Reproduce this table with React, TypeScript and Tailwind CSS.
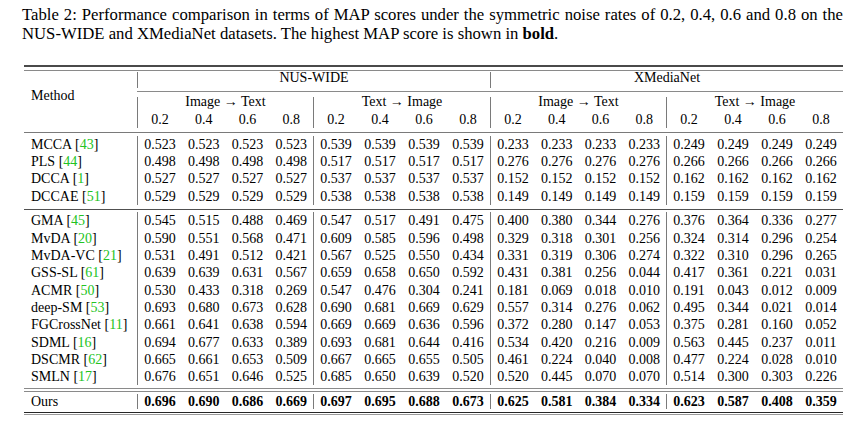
import React from 'react';

type Row = { name: string; cite: string; vals: string[][] };

const top: Row[] = [
  { name: 'MCCA', cite: '43', vals: [['0.523', '0.523', '0.523', '0.523'], ['0.539', '0.539', '0.539', '0.539'], ['0.233', '0.233', '0.233', '0.233'], ['0.249', '0.249', '0.249', '0.249']] },
  { name: 'PLS', cite: '44', vals: [['0.498', '0.498', '0.498', '0.498'], ['0.517', '0.517', '0.517', '0.517'], ['0.276', '0.276', '0.276', '0.276'], ['0.266', '0.266', '0.266', '0.266']] },
  { name: 'DCCA', cite: '1', vals: [['0.527', '0.527', '0.527', '0.527'], ['0.537', '0.537', '0.537', '0.537'], ['0.152', '0.152', '0.152', '0.152'], ['0.162', '0.162', '0.162', '0.162']] },
  { name: 'DCCAE', cite: '51', vals: [['0.529', '0.529', '0.529', '0.529'], ['0.538', '0.538', '0.538', '0.538'], ['0.149', '0.149', '0.149', '0.149'], ['0.159', '0.159', '0.159', '0.159']] },
];

const deep: Row[] = [
  { name: 'GMA', cite: '45', vals: [['0.545', '0.515', '0.488', '0.469'], ['0.547', '0.517', '0.491', '0.475'], ['0.400', '0.380', '0.344', '0.276'], ['0.376', '0.364', '0.336', '0.277']] },
  { name: 'MvDA', cite: '20', vals: [['0.590', '0.551', '0.568', '0.471'], ['0.609', '0.585', '0.596', '0.498'], ['0.329', '0.318', '0.301', '0.256'], ['0.324', '0.314', '0.296', '0.254']] },
  { name: 'MvDA-VC', cite: '21', vals: [['0.531', '0.491', '0.512', '0.421'], ['0.567', '0.525', '0.550', '0.434'], ['0.331', '0.319', '0.306', '0.274'], ['0.322', '0.310', '0.296', '0.265']] },
  { name: 'GSS-SL', cite: '61', vals: [['0.639', '0.639', '0.631', '0.567'], ['0.659', '0.658', '0.650', '0.592'], ['0.431', '0.381', '0.256', '0.044'], ['0.417', '0.361', '0.221', '0.031']] },
  { name: 'ACMR', cite: '50', vals: [['0.530', '0.433', '0.318', '0.269'], ['0.547', '0.476', '0.304', '0.241'], ['0.181', '0.069', '0.018', '0.010'], ['0.191', '0.043', '0.012', '0.009']] },
  { name: 'deep-SM', cite: '53', vals: [['0.693', '0.680', '0.673', '0.628'], ['0.690', '0.681', '0.669', '0.629'], ['0.557', '0.314', '0.276', '0.062'], ['0.495', '0.344', '0.021', '0.014']] },
  { name: 'FGCrossNet', cite: '11', vals: [['0.661', '0.641', '0.638', '0.594'], ['0.669', '0.669', '0.636', '0.596'], ['0.372', '0.280', '0.147', '0.053'], ['0.375', '0.281', '0.160', '0.052']] },
  { name: 'SDML', cite: '16', vals: [['0.694', '0.677', '0.633', '0.389'], ['0.693', '0.681', '0.644', '0.416'], ['0.534', '0.420', '0.216', '0.009'], ['0.563', '0.445', '0.237', '0.011']] },
  { name: 'DSCMR', cite: '62', vals: [['0.665', '0.661', '0.653', '0.509'], ['0.667', '0.665', '0.655', '0.505'], ['0.461', '0.224', '0.040', '0.008'], ['0.477', '0.224', '0.028', '0.010']] },
  { name: 'SMLN', cite: '17', vals: [['0.676', '0.651', '0.646', '0.525'], ['0.685', '0.650', '0.639', '0.520'], ['0.520', '0.445', '0.070', '0.070'], ['0.514', '0.300', '0.303', '0.226']] },
];

const ours = [['0.696', '0.690', '0.686', '0.669'], ['0.697', '0.695', '0.688', '0.673'], ['0.625', '0.581', '0.384', '0.334'], ['0.623', '0.587', '0.408', '0.359']];

// column groups alternate 176 / 177 px so the rules land on the same pixels as the reference
const groupW = ['w-[176px]', 'w-[177px]', 'w-[176px]', 'w-[177px]'];
const rates = ['0.2', '0.4', '0.6', '0.8'];

function Nums({ vals, bold }: { vals: string[]; bold?: boolean }) {
  return (
    <div className={bold ? 'flex font-bold' : 'flex'}>
      {vals.map((v, i) => (
        <div key={i} className="flex-1 text-center">{v}</div>
      ))}
    </div>
  );
}

function Block({ rows, className }: { rows: Row[]; className: string }) {
  return (
    <div className={`flex leading-[17.33px] ${className}`}>
      <div className="w-[113px] pl-[7px]">
        {rows.map((r) => (
          <div key={r.name} className="h-[17.33px] whitespace-nowrap">
            {r.name} [<span className="text-[#22c322]">{r.cite}</span>]
          </div>
        ))}
      </div>
      {groupW.map((w, g) => (
        <div key={g} className={`${w} border-l border-[#7a7a7a]`}>
          {rows.map((r) => (
            <div key={r.name} className="h-[17.33px]">
              <Nums vals={r.vals[g]} />
            </div>
          ))}
        </div>
      ))}
    </div>
  );
}

export default function App() {
  return (
    <div className="w-[861px] h-[428px] overflow-hidden bg-white text-black font-['Liberation_Serif',serif]">
      {/* Caption */}
      <div className="pt-[6px] pl-[22px] w-[843px] text-[16.7px] leading-[18.5px]">
        <p className="text-justify [text-align-last:justify]">
          Table 2: Performance comparison in terms of MAP scores under the symmetric noise rates of 0.2, 0.4, 0.6 and 0.8 on the
        </p>
        <p>
          NUS-WIDE and XMediaNet datasets. The highest MAP score is shown in <span className="font-bold">bold</span>.
        </p>
      </div>

      {/* Table */}
      <div className="ml-[24px] mt-[22px] w-[819px] text-[14px]">
        <div className="h-[2px] bg-[#4a4a4a]" />
        <div className="mt-[3px] h-[1px] bg-[#8a8a8a]" />

        {/* Header */}
        <div className="mt-[1px] flex">
          <div className="w-[113px] pl-[7px] pt-[17px] leading-[14px]">Method</div>
          <div className="flex-1">
            <div className="flex h-[16px] leading-[12px]">
              <div className="w-[353px] border-l border-[#7a7a7a] text-center">NUS-WIDE</div>
              <div className="w-[353px] border-l border-[#7a7a7a] text-center">XMediaNet</div>
            </div>
            <div className="mt-[3px] h-[1px] bg-[#8a8a8a]" />
            <div className="mt-[5px] flex h-[31px]">
              {groupW.map((w, g) => (
                <div key={g} className={`${w} flex flex-col border-l border-[#7a7a7a]`}>
                  <div className="-mt-[3.7px] leading-[17.33px]">
                    <div className="text-center">{g % 2 === 0 ? 'Image → Text' : 'Text → Image'}</div>
                    <Nums vals={rates} />
                  </div>
                </div>
              ))}
            </div>
          </div>
        </div>

        <div className="mt-[4px] h-[1px] bg-[#7a7a7a]" />
        <Block rows={top} className="mt-[2.6px]" />
        <div className="mt-[4px] h-[1px] bg-[#505050]" />
        <Block rows={deep} className="mt-[2.3px]" />

        <div className="mt-[2.4px] h-[1px] bg-[#8a8a8a]" />
        <div className="mt-[2px] h-[1px] bg-[#8a8a8a]" />

        {/* Ours */}
        <div className="mt-[2px] flex h-[15px] leading-[15px]">
          <div className="w-[113px] pl-[7px]">Ours</div>
          {groupW.map((w, g) => (
            <div key={g} className={`${w} border-l border-[#7a7a7a]`}>
              <Nums vals={ours[g]} bold />
            </div>
          ))}
        </div>

        <div className="mt-[3px] h-[1px] bg-[#262626]" />
        <div className="mt-[1px] h-[1px] bg-[#9a9a9a]" />
      </div>
    </div>
  );
}
